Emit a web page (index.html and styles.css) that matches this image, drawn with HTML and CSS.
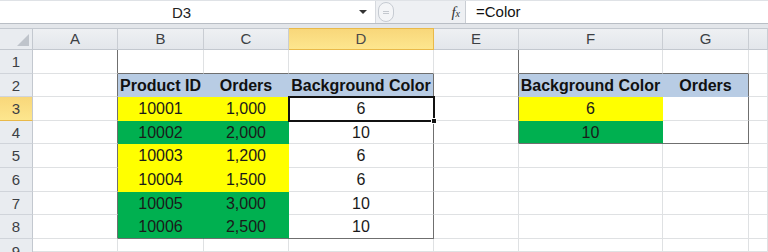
FILE: index.html
```html
<!DOCTYPE html>
<html lang="en">
<head>
  <meta charset="UTF-8">
  <title>Background Color</title>
  <link rel="stylesheet" href="styles.css">
</head>
<body>
<div class="formula-bar">
  <div class="name-box">
    <span class="name">D3</span>
    <span class="drop"></span>
  </div>
  <div class="fx-area">
    <span class="pill"><span class="pill-dot"></span></span>
    <span class="fx"><i>f</i><small>x</small></span>
  </div>
  <div class="formula">=Color</div>
</div>
<div class="strip"></div>

<div class="sheet">
  <!-- column headers -->
  <div class="corner"><span class="tri"></span></div>
  <div class="ch">A</div>
  <div class="ch">B</div>
  <div class="ch">C</div>
  <div class="ch sel">D</div>
  <div class="ch">E</div>
  <div class="ch">F</div>
  <div class="ch">G</div>
  <div class="ch"></div>

  <!-- row 1 -->
  <div class="rh">1</div>
  <div class="c edge-r"></div>
  <div class="c dark-b"></div>
  <div class="c dark-b"></div>
  <div class="c dark-b"></div>
  <div class="c edge-r"></div>
  <div class="c dark-b"></div>
  <div class="c dark-b"></div>
  <div class="c"></div>

  <!-- row 2 -->
  <div class="rh">2</div>
  <div class="c edge-r"></div>
  <div class="c hd">Product ID</div>
  <div class="c hd">Orders</div>
  <div class="c hd edge-r">Background Color</div>
  <div class="c edge-r"></div>
  <div class="c hd">Background Color</div>
  <div class="c hd edge-r">Orders</div>
  <div class="c"></div>

  <!-- row 3 -->
  <div class="rh sel">3</div>
  <div class="c edge-r"></div>
  <div class="c yel">10001</div>
  <div class="c yel">1,000</div>
  <div class="c edge-r active">6<span class="handle"></span></div>
  <div class="c edge-r"></div>
  <div class="c yel">6</div>
  <div class="c edge-r"></div>
  <div class="c"></div>

  <!-- row 4 -->
  <div class="rh">4</div>
  <div class="c edge-r"></div>
  <div class="c grn">10002</div>
  <div class="c grn">2,000</div>
  <div class="c edge-r">10</div>
  <div class="c edge-r"></div>
  <div class="c grn dark-b">10</div>
  <div class="c edge-r dark-b"></div>
  <div class="c"></div>

  <!-- row 5 -->
  <div class="rh">5</div>
  <div class="c edge-r"></div>
  <div class="c yel">10003</div>
  <div class="c yel">1,200</div>
  <div class="c edge-r">6</div>
  <div class="c"></div>
  <div class="c"></div>
  <div class="c"></div>
  <div class="c"></div>

  <!-- row 6 -->
  <div class="rh">6</div>
  <div class="c edge-r"></div>
  <div class="c yel">10004</div>
  <div class="c yel">1,500</div>
  <div class="c edge-r">6</div>
  <div class="c"></div>
  <div class="c"></div>
  <div class="c"></div>
  <div class="c"></div>

  <!-- row 7 -->
  <div class="rh">7</div>
  <div class="c edge-r"></div>
  <div class="c grn">10005</div>
  <div class="c grn">3,000</div>
  <div class="c edge-r">10</div>
  <div class="c"></div>
  <div class="c"></div>
  <div class="c"></div>
  <div class="c"></div>

  <!-- row 8 -->
  <div class="rh">8</div>
  <div class="c edge-r"></div>
  <div class="c grn dark-b">10006</div>
  <div class="c grn dark-b">2,500</div>
  <div class="c edge-r dark-b">10</div>
  <div class="c"></div>
  <div class="c"></div>
  <div class="c"></div>
  <div class="c"></div>

  <!-- row 9, only its top shows -->
  <div class="rh last">9</div>
  <div class="c"></div>
  <div class="c"></div>
  <div class="c"></div>
  <div class="c"></div>
  <div class="c"></div>
  <div class="c"></div>
  <div class="c"></div>
  <div class="c"></div>
</div>
</body>
</html>
```

FILE: styles.css
```css
* {
  margin: 0;
  padding: 0;
  box-sizing: border-box;
}
body {
  width: 768px;
  height: 252px;
  overflow: hidden;
  background: #fff;
  font-family: "Liberation Sans", Arial, sans-serif;
  color: #1a1a1a;
}

/* formula bar */
.formula-bar {
  display: flex;
  height: 24px;
  border-top: 1px solid #dfe2e6;
  border-bottom: 1px solid #b9bec5;
  background: #fff;
}
.name-box {
  width: 376px;
  display: flex;
  align-items: center;
  border-right: 1px solid #d6d9de;
}
.name {
  flex: 1;
  text-align: center;
  font-size: 15px;
  color: #222;
  padding-left: 4px;
}
.drop {
  width: 0;
  height: 0;
  border-left: 4px solid transparent;
  border-right: 4px solid transparent;
  border-top: 4px solid #333;
  margin-right: 8px;
}
.fx-area {
  width: 90px;
  display: flex;
  align-items: center;
  justify-content: space-between;
  background: #eef0f3;
  border-right: 1px solid #c9cdd3;
  padding: 0 5px 0 2px;
}
.pill {
  width: 16px;
  height: 20px;
  border: 1px solid #c6cbd2;
  border-radius: 9px;
  background: #f4f5f7;
  display: flex;
  align-items: center;
  justify-content: center;
}
.pill-dot {
  width: 6px;
  height: 3px;
  border-top: 1px solid #c4c8ce;
  border-bottom: 1px solid #c4c8ce;
}
.fx {
  font-family: "Liberation Serif", serif;
  font-size: 15px;
  color: #333;
}
.fx small {
  font-size: 10px;
  font-style: italic;
}
.formula {
  flex: 1;
  padding-left: 10px;
  font-size: 15px;
  line-height: 22px;
  color: #111;
}
.strip {
  height: 4px;
  background: #e3e6ea;
}

/* sheet grid */
.sheet {
  display: grid;
  grid-template-columns: 33px 85px 86px 85px 145px 85px 144px 86px 1fr;
  grid-template-rows: 22px repeat(8, 23.6px) 13px;
  font-size: 16px;
}
.corner {
  background: #e9ecf0;
  border-right: 1px solid #c3c8cf;
  border-bottom: 1px solid #c3c8cf;
  border-top: 1px solid #c3c8cf;
  display: flex;
  align-items: flex-end;
  justify-content: flex-end;
  padding: 3px;
}
.tri {
  width: 0;
  height: 0;
  border-left: 12px solid transparent;
  border-bottom: 12px solid #bfc4cb;
}
.ch {
  background: linear-gradient(#eef0f3, #e3e6eb);
  border-right: 1px solid #c9cdd3;
  border-bottom: 1px solid #c3c8cf;
  border-top: 1px solid #c3c8cf;
  text-align: center;
  font-size: 15px;
  line-height: 20px;
  color: #3c3f44;
}
.ch.sel {
  background: linear-gradient(#f8d77a, #fde68e);
  border-color: #e9b949;
  color: #4a4a4a;
}
.rh {
  background: #e9ecf0;
  border-right: 1px solid #c3c8cf;
  border-bottom: 1px solid #d0d4da;
  text-align: center;
  font-size: 15px;
  line-height: 23px;
  color: #3c3f44;
  overflow: hidden;
}
.rh.sel {
  background: linear-gradient(#f8d77a, #fde68e);
  border-bottom-color: #e9b949;
}
.rh.last {
  line-height: 26px;
  border-bottom: 0;
}
.c {
  border-right: 1px solid #dfe1e3;
  border-bottom: 1px solid #dfe1e3;
  text-align: center;
  line-height: 24px;
  white-space: nowrap;
  position: relative;
}
.hd {
  background: #b8cce4;
  border-color: #b8cce4;
  font-weight: bold;
  color: #111;
}
.yel {
  background: #ffff00;
  border-color: #ffff00;
}
.grn {
  background: #00b050;
  border-color: #00b050;
}
.edge-r {
  border-right-color: #6f6f6f;
}
.dark-b {
  border-bottom-color: #6f6f6f;
}
.active {
  outline: 2px solid #111;
  outline-offset: -1px;
  box-shadow: inset 1px 0 0 #2b2bbf;
  z-index: 1;
}
.handle {
  position: absolute;
  right: -4px;
  bottom: -4px;
  width: 6px;
  height: 6px;
  background: #111;
  border: 1px solid #fff;
}
```
